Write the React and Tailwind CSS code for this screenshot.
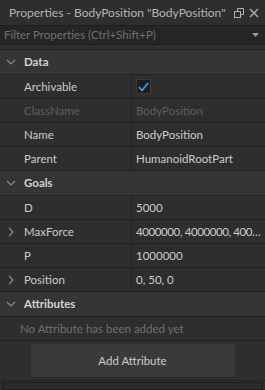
import React from 'react';

const font = { fontFamily: 'Lato, "Noto Sans", sans-serif' };

function ChevronDown() {
    return (
        <svg width="10" height="10" viewBox="0 0 10 10" className="shrink-0">
            <path d="M1 3 L5 7 L9 3" fill="none" stroke="#8a8a8a" strokeWidth="1.2" />
        </svg>
    );
}

function ChevronRight() {
    return (
        <svg width="10" height="10" viewBox="0 0 10 10" className="shrink-0">
            <path d="M3 1 L7 5 L3 9" fill="none" stroke="#8a8a8a" strokeWidth="1.2" />
        </svg>
    );
}

function Section({ title }) {
    return (
        <div className="flex items-center h-[25px] bg-[#353535] border-b border-[#222222] pl-[6px]">
            <ChevronDown />
            <span className="ml-[8px] text-[11.5px] font-bold text-[#d2d2d2]">{title}</span>
        </div>
    );
}

function Row({ name, value, expand, disabled, tight, children }) {
    const text = disabled ? 'text-[#5e5e5e]' : 'text-[#cccccc]';
    return (
        <div className="flex h-[24px] border-b border-[#222222] text-[11.5px]">
            <div className="w-[132px] flex items-center border-r border-[#222222] pl-[6px]">
                <div className="w-[10px]">{expand && <ChevronRight />}</div>
                <span className={`ml-[8px] ${text}`}>{name}</span>
            </div>
            <div className={`flex-1 min-w-0 flex items-center pl-[4px] pr-[3px] ${text}`}>
                {children || <span className={`truncate ${tight ? 'tracking-[-0.4px]' : ''}`}>{value}</span>}
            </div>
        </div>
    );
}

export default function App() {
    return (
        <div className="w-[265px] h-[390px] bg-[#2e2e2e] overflow-hidden flex flex-col" style={font}>
            {/* title bar */}
            <div className="h-[25px] flex items-center pl-[9px] pr-[6px] bg-[#2e2e2e]">
                <span className="text-[12px] text-[#b4b4b4] flex-1 whitespace-nowrap">Properties - BodyPosition "BodyPosition"</span>
                <svg width="10" height="10" viewBox="0 0 10 10" className="mr-[5px] shrink-0">
                    <rect x="0.5" y="3.5" width="6" height="6" fill="none" stroke="#b4b4b4" />
                    <path d="M3.5 3.5 V0.5 H9.5 V6.5 H6.5" fill="none" stroke="#b4b4b4" />
                </svg>
                <svg width="10" height="10" viewBox="0 0 10 10" className="shrink-0">
                    <path d="M1 1 L9 9 M9 1 L1 9" stroke="#b4b4b4" strokeWidth="1.3" />
                </svg>
            </div>
            {/* filter */}
            <div className="h-[20px] flex items-center pl-[4px] pr-[6px] bg-[#252525] border-y border-[#1e1e1e]">
                <span className="flex-1 text-[11.5px] text-[#707070]">Filter Properties (Ctrl+Shift+P)</span>
                <svg width="7" height="4" viewBox="0 0 7 4">
                    <path d="M0 0 H7 L3.5 4 Z" fill="#9a9a9a" />
                </svg>
            </div>
            <div className="h-[5px] border-b border-[#222222]" />

            <Section title="Data" />
            <Row name="Archivable">
                <div className="w-[15px] h-[15px] bg-[#1e1e1e] border border-[#3a3a3a] flex items-center justify-center">
                    <svg width="11" height="10" viewBox="0 0 11 10">
                        <path d="M1 5 L4 8.5 L10 1" fill="none" stroke="#3ba4f5" strokeWidth="1.6" />
                    </svg>
                </div>
            </Row>
            <Row name="ClassName" value="BodyPosition" disabled />
            <Row name="Name" value="BodyPosition" />
            <Row name="Parent" value="HumanoidRootPart" />

            <Section title="Goals" />
            <Row name="D" value="5000" />
            <Row name="MaxForce" value="4000000, 4000000, 4000000" expand tight />
            <Row name="P" value="1000000" />
            <Row name="Position" value="0, 50, 0" expand />

            <Section title="Attributes" />
            <div className="h-[24px] flex items-center pl-[20px] border-b border-[#222222] text-[11.5px] text-[#6e6e6e]">
                No Attribute has been added yet
            </div>
            <div className="h-[40px] flex items-center justify-center border-b border-[#222222]">
                <button className="w-[204px] h-[33px] rounded-[3px] bg-[#3a3a3a] text-[11.5px] text-[#cccccc]">
                    Add Attribute
                </button>
            </div>
            <div className="flex-1 mt-[1px] mx-[2px] border border-[#1c1c1c] bg-[#2a2a2a]" />
        </div>
    );
}
